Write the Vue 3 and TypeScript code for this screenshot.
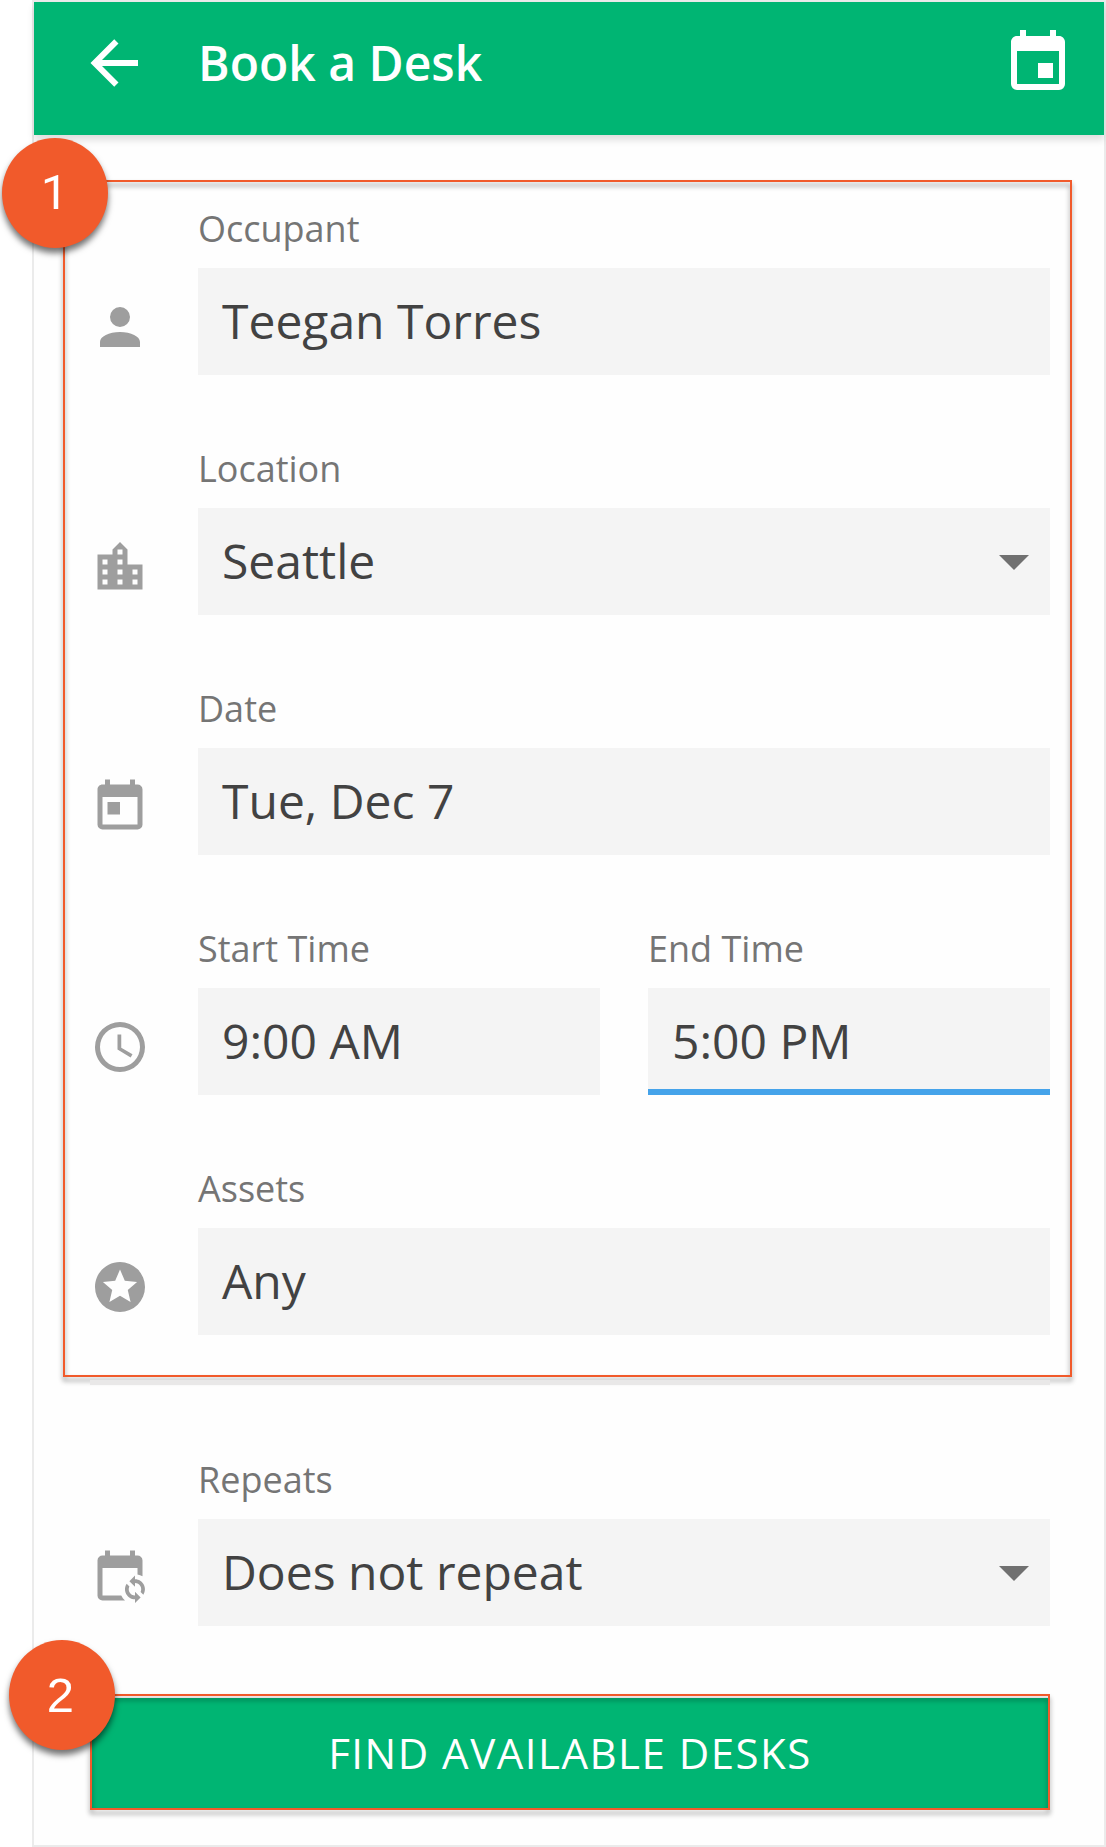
<script setup lang="ts">
interface Field {
  label: string
  value: string
  select?: boolean
  active?: boolean
}

interface Row {
  icon: string
  fields: Field[]
}

const icons = {
  back: 'M20,11V13H8L13.5,18.5L12.08,19.92L4.16,12L12.08,4.08L13.5,5.5L8,11H20Z',
  calendar:
    'M19,19H5V8H19M16,1V3H8V1H6V3H5C3.89,3 3,3.89 3,5V19A2,2 0 0,0 5,21H19A2,2 0 0,0 21,19V5C21,3.89 20.1,3 19,3H18V1M17,12H12V17H17V12Z',
  account:
    'M12,4A4,4 0 0,1 16,8A4,4 0 0,1 12,12A4,4 0 0,1 8,8A4,4 0 0,1 12,4M12,14C16.42,14 20,15.79 20,18V20H4V18C4,15.79 7.58,14 12,14Z',
  city: 'M19,15H17V13H19M19,19H17V17H19M13,7H11V5H13M13,11H11V9H13M13,15H11V13H13M13,19H11V17H13M7,11H5V9H7M7,15H5V13H7M7,19H5V17H7M15,11V5L12,2L9,5V7H3V21H21V11H15Z',
  today:
    'M7,10H12V15H7M19,19H5V8H19M19,3H18V1H16V3H8V1H6V3H5C3.89,3 3,3.9 3,5V19A2,2 0 0,0 5,21H19A2,2 0 0,0 21,19V5A2,2 0 0,0 19,3Z',
  clock:
    'M12,20A8,8 0 0,0 20,12A8,8 0 0,0 12,4A8,8 0 0,0 4,12A8,8 0 0,0 12,20M12,2A10,10 0 0,1 22,12A10,10 0 0,1 12,22C6.47,22 2,17.5 2,12A10,10 0 0,1 12,2M12.5,7V12.25L17,14.92L16.25,16.15L11,13V7H12.5Z',
  star: 'M16.23,18L12,15.45L7.77,18L8.89,13.19L5.16,9.96L10.08,9.54L12,5L13.92,9.53L18.84,9.95L15.11,13.18L16.23,18M12,2C6.47,2 2,6.5 2,12A10,10 0 0,0 12,22A10,10 0 0,0 22,12A10,10 0 0,0 12,2Z',
  sync: 'M18,11V12.5C21.19,12.5 23.09,16.05 21.33,18.71L20.24,17.62C21.06,15.96 19.85,14 18,14V15.5L15.75,13.25L18,11M18,22V20.5C14.81,20.5 12.91,16.95 14.67,14.29L15.76,15.38C14.94,17.04 16.15,19 18,19V17.5L20.25,19.75L18,22M19,3H18V1H16V3H8V1H6V3H5A2,2 0 0,0 3,5V19A2,2 0 0,0 5,21H14C13.36,20.45 12.86,19.77 12.5,19H5V8H19V10.59C19.71,10.7 20.39,10.94 21,11.31V5A2,2 0 0,0 19,3Z',
}

const groups: { name: string; rows: Row[] }[] = [
  {
    name: 'details',
    rows: [
      { icon: icons.account, fields: [{ label: 'Occupant', value: 'Teegan Torres' }] },
      { icon: icons.city, fields: [{ label: 'Location', value: 'Seattle', select: true }] },
      { icon: icons.today, fields: [{ label: 'Date', value: 'Tue, Dec 7' }] },
      {
        icon: icons.clock,
        fields: [
          { label: 'Start Time', value: '9:00 AM' },
          { label: 'End Time', value: '5:00 PM', active: true },
        ],
      },
      { icon: icons.star, fields: [{ label: 'Assets', value: 'Any' }] },
    ],
  },
  {
    name: 'recurrence',
    rows: [{ icon: icons.sync, fields: [{ label: 'Repeats', value: 'Does not repeat', select: true }] }],
  },
]
</script>

<template>
  <div class="screen">
    <header class="bar">
      <svg class="bar-icon" viewBox="0 0 24 24"><path :d="icons.back" /></svg>
      <h1 class="title">Book a Desk</h1>
      <svg class="bar-icon calendar" viewBox="0 0 24 24"><path :d="icons.calendar" /></svg>
    </header>

    <section v-for="group in groups" :key="group.name" class="group" :class="group.name">
      <div v-for="row in group.rows" :key="row.icon" class="row">
        <svg class="row-icon" viewBox="0 0 24 24"><path fill-rule="evenodd" :d="row.icon" /></svg>
        <div class="fields">
          <div v-for="field in row.fields" :key="field.label" class="field">
            <div class="label">{{ field.label }}</div>
            <div class="input" :class="{ active: field.active }">
              <span>{{ field.value }}</span>
              <i v-if="field.select" class="caret"></i>
            </div>
          </div>
        </div>
      </div>
      <span v-if="group.name === 'details'" class="badge badge-form">1</span>
    </section>

    <div class="action">
      <button class="submit" type="button">FIND AVAILABLE DESKS</button>
      <span class="badge badge-action">2</span>
    </div>
  </div>
</template>

<style>
body {
  margin: 0;
  background: #fff;
}
</style>

<style scoped>
.screen {
  box-sizing: border-box;
  display: flex;
  flex-direction: column;
  width: 1074px;
  height: 1847px;
  margin-left: 32px;
  border: 2px solid #ebebeb;
  background: #fefefe;
  font-family: 'Open Sans', 'Noto Sans', sans-serif;
}

.bar {
  box-sizing: border-box;
  display: flex;
  flex: none;
  height: 133px;
  padding: 25px 30px 0 44px;
  background: #00b573;
  box-shadow: 0 5px 7px rgba(0, 0, 0, 0.13);
}

.bar-icon {
  flex: none;
  width: 72px;
  height: 72px;
  fill: #fff;
}

.calendar {
  margin-left: auto;
}

.title {
  margin: 0 0 0 48px;
  color: #fff;
  font-size: 48px;
  font-weight: 600;
  line-height: 72px;
  white-space: nowrap;
}

.group {
  position: relative;
  box-sizing: border-box;
  display: flex;
  flex: none;
  flex-direction: column;
  gap: 69px;
}

.details {
  width: 1009px;
  height: 1197px;
  margin: 45px 0 0 29px;
  padding: 24px 22px 0 27px;
}

/* callout outline drawn over the group */
.details::after,
.action::after {
  content: '';
  position: absolute;
  inset: 0;
  border: 2px solid #f15a2b;
  filter: drop-shadow(0 4px 2.5px rgba(0, 0, 0, 0.45));
  pointer-events: none;
}

.recurrence {
  margin: 3px 54px 0 56px;
  padding-top: 70px;
  border-top: 5px solid #e9e8e8;
}

.row {
  display: flex;
  gap: 48px;
}

.row-icon {
  flex: none;
  width: 60px;
  height: 60px;
  margin-top: 93px;
  fill: #9e9e9e;
}

.fields {
  display: flex;
  flex: 1;
  gap: 48px;
}

.field {
  flex: 1;
}

.label {
  height: 50px;
  margin-bottom: 14px;
  color: #757575;
  font-size: 36px;
  line-height: 50px;
  white-space: nowrap;
}

.input {
  box-sizing: border-box;
  display: flex;
  align-items: center;
  justify-content: space-between;
  height: 107px;
  padding: 0 21px 2px 24px;
  background: #f4f4f4;
  color: #424242;
  font-size: 48px;
  line-height: 66px;
  white-space: nowrap;
}

.active {
  box-shadow: inset 0 -6px #45a3ea;
}

.caret {
  width: 0;
  height: 0;
  margin-top: 3px;
  border: 15px solid transparent;
  border-top-color: #707070;
  border-bottom: 0;
}

.action {
  position: relative;
  box-sizing: border-box;
  flex: none;
  width: 960px;
  height: 116px;
  margin: 68px 0 0 56px;
  padding: 4px 1px 1px;
}

.submit {
  display: block;
  width: 100%;
  height: 111px;
  padding: 0 0 2px;
  border: 0;
  background: #00b573;
  color: #fff;
  font-family: inherit;
  font-size: 42px;
  letter-spacing: 1.5px;
  line-height: 109px;
  white-space: nowrap;
}

.badge {
  position: absolute;
  z-index: 1;
  width: 106px;
  height: 110px;
  border-radius: 50%;
  background: #f15a2b;
  box-shadow: 0 5px 6px rgba(0, 0, 0, 0.55);
  color: #fff;
  font-family: 'Liberation Sans', Arial, sans-serif;
  font-size: 49px;
  line-height: 110px;
  text-align: center;
}

.badge-form {
  top: -42px;
  left: -61px;
  font-family: Roboto, sans-serif;
  text-indent: -1px;
}

.badge-action {
  top: -54px;
  left: -81px;
  text-indent: -3px;
}
</style>
